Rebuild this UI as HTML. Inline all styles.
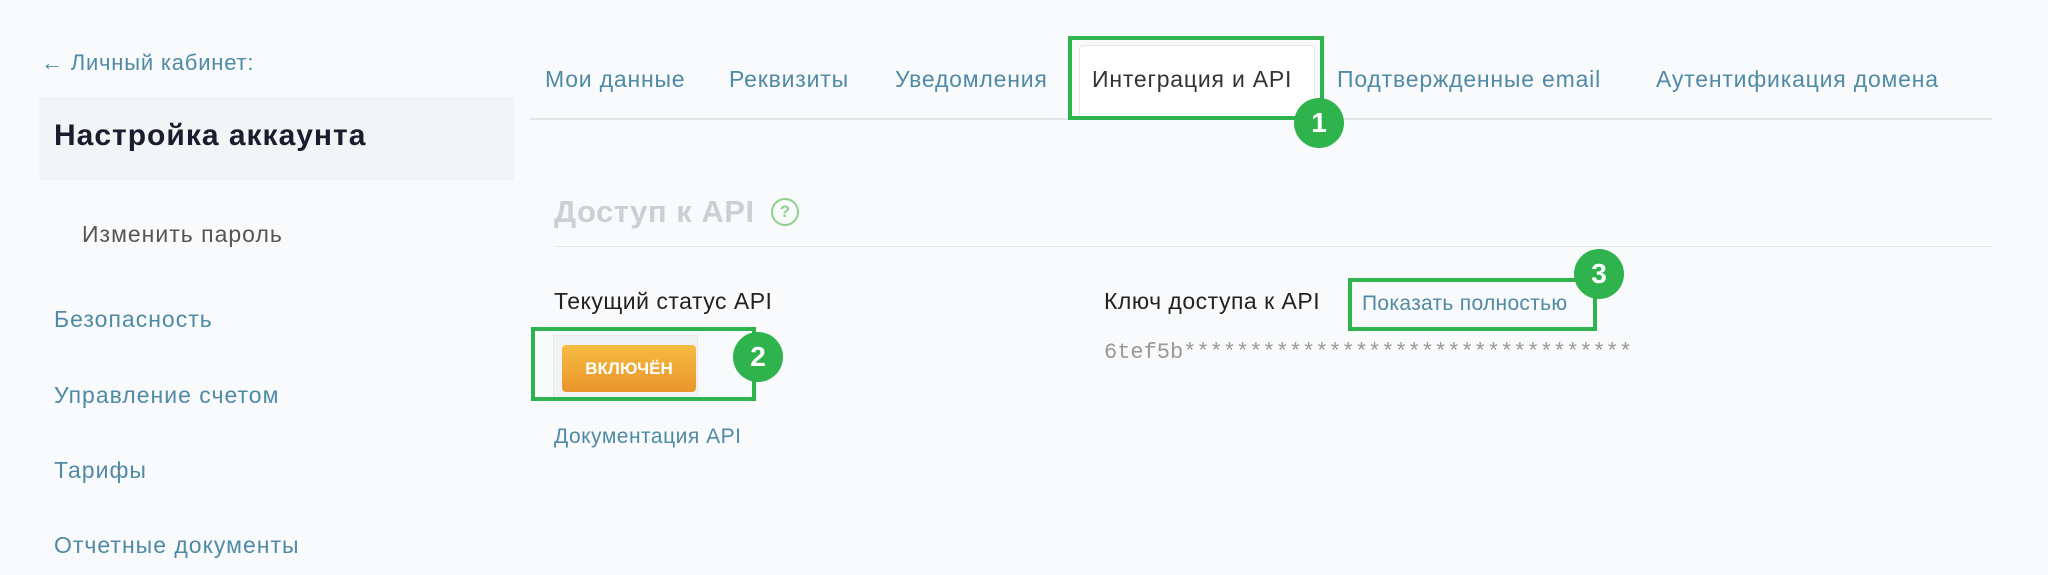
<!DOCTYPE html>
<html><head><meta charset="utf-8"><style>
*{margin:0;padding:0;box-sizing:border-box}
body{width:2048px;height:575px;background:#f8fafc;font-family:"Liberation Sans","DejaVu Sans",sans-serif;position:relative;overflow:hidden}
.a{position:absolute;white-space:nowrap;line-height:1}
.lk{color:#4f8aa6}
.g{border:4px solid #2fb34c;position:absolute}
.b{position:absolute;width:50px;height:50px;border-radius:50%;background:#2fb34c;color:#fff;font-weight:bold;font-size:28px;text-align:center;line-height:50px}
.t{font-size:23px;letter-spacing:0.8px;top:68px}
.s{font-size:23px;letter-spacing:1px}
</style></head><body>
<div class="a lk" style="left:41px;top:52px;font-size:22px;letter-spacing:0.8px">← Личный кабинет:</div>
<div class="a" style="left:39px;top:97px;width:475px;height:83px;background:#f2f4f6"></div>
<div class="a" style="left:54px;top:121px;font-size:30px;letter-spacing:1px;font-weight:bold;color:#1a1d2e">Настройка аккаунта</div>
<div class="a s" style="left:82px;top:223px;color:#555">Изменить пароль</div>
<div class="a lk s" style="left:54px;top:308px">Безопасность</div>
<div class="a lk s" style="left:54px;top:384px">Управление счетом</div>
<div class="a lk s" style="left:54px;top:459px">Тарифы</div>
<div class="a lk s" style="left:54px;top:534px">Отчетные документы</div>

<div class="a" style="left:529px;top:118px;width:1463px;height:2px;background:#e3e6ea"></div>
<div class="a" style="left:1079px;top:45px;width:236px;height:75px;background:#fff;border:1px solid #e6e6e6;border-bottom:none;border-radius:4px 4px 0 0"></div>
<div class="a lk t" style="left:545px">Мои данные</div>
<div class="a lk t" style="left:729px">Реквизиты</div>
<div class="a lk t" style="left:895px">Уведомления</div>
<div class="a t" style="left:1092px;color:#333">Интеграция и API</div>
<div class="a lk t" style="left:1337px">Подтвержденные email</div>
<div class="a lk t" style="left:1656px">Аутентификация домена</div>
<div class="g" style="left:1068px;top:36px;width:256px;height:84px"></div>
<div class="b" style="left:1294px;top:98px">1</div>

<div class="a" style="left:554px;top:196px;font-size:31px;letter-spacing:0.5px;font-weight:bold;color:#cdd0d3">Доступ к API</div>
<div class="a" style="left:771px;top:198px;width:28px;height:28px;border:2.5px solid #8fd08f;border-radius:50%;color:#8fd08f;font-size:17px;font-weight:bold;text-align:center;line-height:23px">?</div>
<div class="a" style="left:554px;top:246px;width:1438px;height:1px;background:#e6e9ec"></div>

<div class="a" style="left:554px;top:290px;font-size:23px;letter-spacing:0.5px;color:#222">Текущий статус API</div>
<div class="a" style="left:553px;top:335px;width:145px;height:63px;background:#f1f2f4;border:1px solid #e8e8e8"></div>
<div class="a" style="left:562px;top:345px;width:134px;height:47px;border-radius:4px;background:linear-gradient(#f5bb42,#e9952b);color:#fff;font-weight:bold;font-size:17px;text-align:center;line-height:47px">ВКЛЮЧЁН</div>
<div class="g" style="left:531px;top:327px;width:225px;height:74px"></div>
<div class="b" style="left:733px;top:332px">2</div>
<div class="a lk" style="left:554px;top:426px;font-size:21px;letter-spacing:0.5px">Документация API</div>

<div class="a" style="left:1104px;top:290px;font-size:23px;letter-spacing:0.5px;color:#222">Ключ доступа к API</div>
<div class="a lk" style="left:1362px;top:293px;font-size:21px;letter-spacing:0.3px">Показать полностью</div>
<div class="g" style="left:1348px;top:278px;width:249px;height:53px"></div>
<div class="b" style="left:1574px;top:249px">3</div>
<div class="a" style="left:1104px;top:342px;font-size:22px;color:#999;font-family:'Liberation Mono',monospace">6tef5b**********************************</div>
</body></html>
